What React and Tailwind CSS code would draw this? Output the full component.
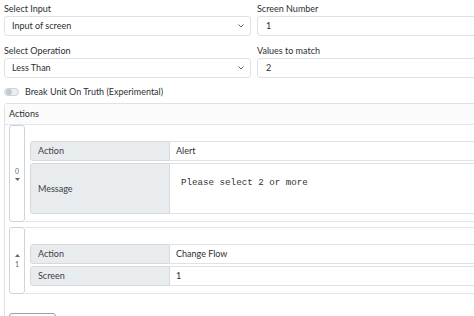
import React from 'react';

const Chevron = () => (
  <svg width="6" height="4" viewBox="0 0 6 4" className="text-[#555]">
    <polyline points="0.5,0.5 3,3 5.5,0.5" fill="none" stroke="currentColor" strokeWidth="0.9" />
  </svg>
);

const Caret = ({ up }) => (
  <svg width="5" height="3" viewBox="0 0 5 3" className="text-[#666]">
    <polygon points={up ? '0,3 5,3 2.5,0' : '0,0 5,0 2.5,3'} fill="currentColor" />
  </svg>
);

const Field = ({ label, children }) => (
  <div className="flex flex-col">
    <div className="h-[12px] leading-[12px] mb-[1px]">{label}</div>
    {children}
  </div>
);

const Select = ({ value }) => (
  <div className="h-[20px] border border-[#dee2e6] rounded-[3px] bg-white flex items-center justify-between pl-[7px] pr-[6px]">
    <span>{value}</span>
    <Chevron />
  </div>
);

const Input = ({ value }) => (
  <div className="h-[20px] border border-[#dee2e6] rounded-[3px] bg-white flex items-center pl-[8px]">
    {value}
  </div>
);

const Row = ({ label, children, tall }) => (
  <div className={`flex ${tall ? 'h-[51px]' : 'h-[20px]'}`}>
    <div className="w-[140px] shrink-0 bg-[#e9ecef] border border-[#d6dadf] rounded-l-[3px] px-[7px] flex items-center text-[#3b4046]">
      {label}
    </div>
    {children}
  </div>
);

const Item = ({ index, up, first, children }) => (
  <div className={`flex pl-[4px] ${first ? '' : 'mt-[5px]'}`}>
    <div className="w-[16px] shrink-0 border border-[#cfd4d9] rounded-[3px] flex flex-col items-center justify-center gap-[3px] text-[7px] text-[#666]">
      {up ? (
        <>
          <Caret up />
          <span className="leading-[8px]">{index}</span>
        </>
      ) : (
        <>
          <span className="leading-[8px]">{index}</span>
          <Caret />
        </>
      )}
    </div>
    <div className={`flex-1 pl-[5px] pt-[16px] pb-[7px] border-b border-[#e3e6ea] ${first ? '' : 'border-t'} flex flex-col gap-[2px]`}>
      {children}
    </div>
  </div>
);

export default function App() {
  return (
    <div
      className="w-[474px] h-[316px] overflow-hidden bg-white text-[9px] text-[#2b2f33]"
      style={{ fontFamily: 'Lato, "Noto Sans", sans-serif' }}
    >
      <div className="w-[520px] pl-[4px] pt-[3px]">
        <div className="grid grid-cols-[247px_260px] gap-x-[6px] gap-y-[9px]">
          <Field label="Select Input">
            <Select value="Input of screen" />
          </Field>
          <Field label="Screen Number">
            <Input value="1" />
          </Field>
          <Field label="Select Operation">
            <Select value="Less Than" />
          </Field>
          <Field label="Values to match">
            <Input value="2" />
          </Field>
        </div>

        <div className="mt-[8px] h-[12px] flex items-center gap-[6px]">
          <div className="w-[15px] h-[8px] rounded-full border border-[#cdd2d7] bg-[#eceef0] flex items-center pl-[1px]">
            <div className="w-[6px] h-[6px] rounded-full bg-[#c4c9ce]" />
          </div>
          <span>Break Unit On Truth (Experimental)</span>
        </div>

        <div className="mt-[5px] border border-[#dee2e6] rounded-t-[3px] h-[240px]">
          <div className="h-[21px] bg-[#fbfbfb] border-b border-[#e3e6ea] flex items-center pl-[4px]">
            Actions
          </div>

          <Item index="0" first>
            <Row label="Action">
              <div className="flex-1 border border-l-0 border-[#dee2e6] bg-white flex items-center pl-[6px]">Alert</div>
            </Row>
            <Row label="Message" tall>
              <div
                className="flex-1 border border-l-0 border-[#dee2e6] bg-white pl-[11px] pt-[12px] text-[9.2px] text-[#333]"
                style={{ fontFamily: '"Liberation Mono", monospace' }}
              >
                Please select 2 or more
              </div>
            </Row>
          </Item>

          <Item index="1" up>
            <Row label="Action">
              <div className="flex-1 border border-l-0 border-[#dee2e6] bg-white flex items-center pl-[6px]">Change Flow</div>
            </Row>
            <Row label="Screen">
              <div className="flex-1 border border-l-0 border-[#dee2e6] bg-white flex items-center pl-[6px]">1</div>
            </Row>
          </Item>

          <div className="pl-[4px] mt-[19px]">
            <button className="w-[47px] h-[20px] border border-[#9aa0a6] rounded-[3px] bg-white" aria-label="Add" />
          </div>
        </div>
      </div>
    </div>
  );
}
